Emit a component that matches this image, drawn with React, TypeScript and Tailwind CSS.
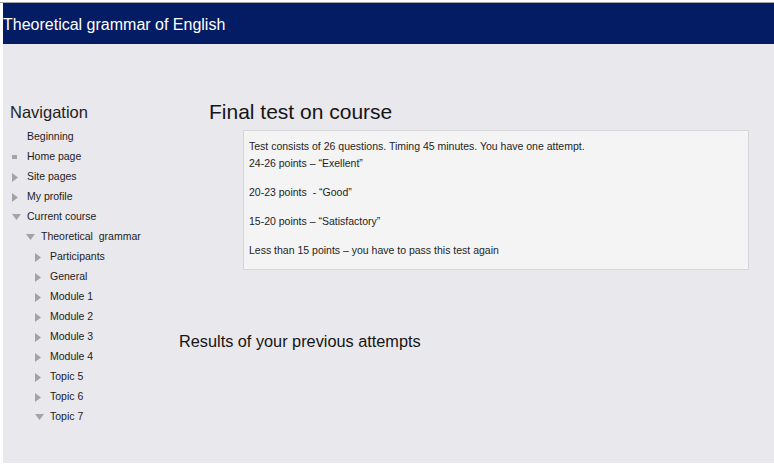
type Icon = "none" | "square" | "right" | "down";

interface NavItem {
  label: string;
  icon: Icon;
  level: 0 | 1 | 2;
}

const items: NavItem[] = [
  { label: "Beginning", icon: "none", level: 0 },
  { label: "Home page", icon: "square", level: 0 },
  { label: "Site pages", icon: "right", level: 0 },
  { label: "My profile", icon: "right", level: 0 },
  { label: "Current course", icon: "down", level: 0 },
  { label: "Theoretical\u00a0 grammar", icon: "down", level: 1 },
  { label: "Participants", icon: "right", level: 2 },
  { label: "General", icon: "right", level: 2 },
  { label: "Module 1", icon: "right", level: 2 },
  { label: "Module 2", icon: "right", level: 2 },
  { label: "Module 3", icon: "right", level: 2 },
  { label: "Module 4", icon: "right", level: 2 },
  { label: "Topic 5", icon: "right", level: 2 },
  { label: "Topic 6", icon: "right", level: 2 },
  { label: "Topic 7", icon: "down", level: 2 },
];

const indent = {
  0: "pl-[9px]",
  1: "pl-[23px]",
  2: "pl-[32px]",
};

const NavIcon = ({ icon }: { icon: Icon }) => {
  if (icon === "square")
    return <span className="block w-[5px] h-[4px] bg-[#a5a5a8]" />;
  if (icon === "right")
    return (
      <svg width="6" height="9" viewBox="0 0 6 9">
        <path d="M0 0 L6 4.5 L0 9 Z" fill="#a3a3a6" />
      </svg>
    );
  if (icon === "down")
    return (
      <svg width="9" height="6" viewBox="0 0 9 6">
        <path d="M0 0 L9 0 L4.5 6 Z" fill="#a3a3a6" />
      </svg>
    );
  return null;
};

const Sidebar = () => (
  <aside className="w-[170px] shrink-0 pt-[58px]">
    <h2 className="pl-[7px] text-[16.5px] leading-[20px] text-[#1f1f1f]">
      Navigation
    </h2>
    <ul className="mt-[5px]">
      {items.map((item) => (
        <li
          key={item.label}
          className={`flex items-center h-[20px] text-[10.5px] text-[#1c1c1c] ${indent[item.level]}`}
        >
          <span className="w-[15px] h-[10px] flex items-center">
            <NavIcon icon={item.icon} />
          </span>
          <span>{item.label}</span>
        </li>
      ))}
    </ul>
  </aside>
);

const rules = [
  "24-26 points \u2013 \u201cExellent\u201d",
  "20-23 points\u00a0 - \u201cGood\u201d",
  "15-20 points \u2013 \u201cSatisfactory\u201d",
  "Less than 15 points \u2013 you have to pass this test again",
];

const Main = () => (
  <main className="flex-1 pt-[56px]">
    <h1 className="ml-[36px] text-[21px] leading-[24px] text-[#151515]">
      Final test on course
    </h1>
    <section className="mt-[6px] ml-[70px] w-[506px] h-[140px] bg-[#f4f4f4] border border-[#d6d6d9] px-[5px] pt-[8px] text-[10.5px] text-[#1e1e1e]">
      <p className="leading-[14px]">
        Test consists of 26 questions. Timing 45 minutes. You have one attempt.
      </p>
      <p className="mt-[3px] leading-[14px]">{rules[0]}</p>
      {rules.slice(1).map((r) => (
        <p key={r} className="mt-[15px] leading-[14px]">
          {r}
        </p>
      ))}
    </section>
    <h3 className="mt-[61px] ml-[6px] text-[16.3px] leading-[20px] text-[#151515]">
      Results of your previous attempts
    </h3>
  </main>
);

export default function App() {
  return (
    <div
      className="w-full h-[466px] bg-white flex flex-col overflow-hidden"
      style={{ fontFamily: '"Liberation Sans", Arial, sans-serif' }}
    >
      <div className="h-[2px] bg-white" />
      <div className="h-px bg-[#a4a4aa]" />
      <header className="h-[41px] ml-[3px] bg-[#031c63] flex items-center">
        <span className="text-[16px] text-white mt-[3px]">
          Theoretical grammar of English
        </span>
      </header>
      <div className="flex-1 flex ml-[3px] mb-[3px] bg-[#e9e8ec]">
        <Sidebar />
        <Main />
      </div>
    </div>
  );
}
